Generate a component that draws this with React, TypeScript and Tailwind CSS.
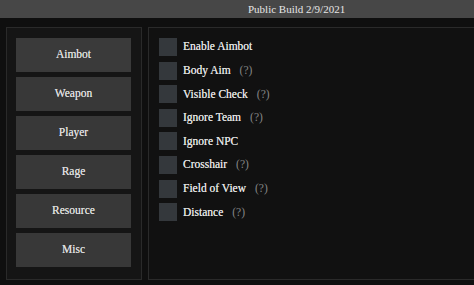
import React, { useState } from 'react';

const tabs = ["Aimbot", "Weapon", "Player", "Rage", "Resource", "Misc"];

const options = [
    { label: "Enable Aimbot", help: false },
    { label: "Body Aim", help: true },
    { label: "Visible Check", help: true },
    { label: "Ignore Team", help: true },
    { label: "Ignore NPC", help: false },
    { label: "Crosshair", help: true },
    { label: "Field of View", help: true },
    { label: "Distance", help: true },
];

const App = () => {
    let [active, setActive] = useState("Aimbot");
    let [checked, setChecked] = useState<Record<string, boolean>>({});

    return (
        <div className="w-[474px] h-[285px] overflow-hidden bg-[#0f0f0f] flex flex-col" style={{ fontFamily: '"Liberation Serif", serif' }}>
            {/* title bar */}
            <div className="h-[18px] shrink-0 bg-[#474747] flex items-center pl-[248px] text-[11px] text-[#e6e6e6]">
                Public Build 2/9/2021
            </div>

            <div className="flex gap-[6px] pl-[6px] pt-[9px] h-[262px]">
                {/* tabs */}
                <div className="w-[136px] shrink-0 border border-[#2a2a2a] bg-[#151515] pl-[9px] pt-[10px] flex flex-col gap-[5px]">
                    {tabs.map((t) => (
                        <button
                            key={t}
                            onClick={() => setActive(t)}
                            className={`w-[115px] h-[34px] flex items-center justify-center text-[11.5px] text-[#dcdcdc] [text-shadow:0_0_0.4px_#dcdcdc] ${active === t ? "bg-[#3a3a3a]" : "bg-[#383838]"}`}
                        >
                            {t}
                        </button>
                    ))}
                </div>

                {/* options */}
                <div className="w-[340px] shrink-0 border border-[#2a2a2a] border-r-0 bg-[#111111] pl-[10px] pt-[10px] flex flex-col gap-[5.6px]">
                    {options.map((o) => (
                        <label key={o.label} className="flex items-center h-[18px] cursor-pointer">
                            <span
                                onClick={() => setChecked({ ...checked, [o.label]: !checked[o.label] })}
                                className={`w-[18px] h-[18px] shrink-0 ${checked[o.label] ? "bg-[#5a6068]" : "bg-[#34383c]"}`}
                            />
                            <span className="ml-[6px] text-[11.5px] text-[#e0e0e0] [text-shadow:0_0_0.4px_#e0e0e0]">{o.label}</span>
                            {o.help && <span className="ml-[9px] text-[11.5px] text-[#858585]">(?)</span>}
                        </label>
                    ))}
                </div>
            </div>
        </div>
    )
}

export default App
